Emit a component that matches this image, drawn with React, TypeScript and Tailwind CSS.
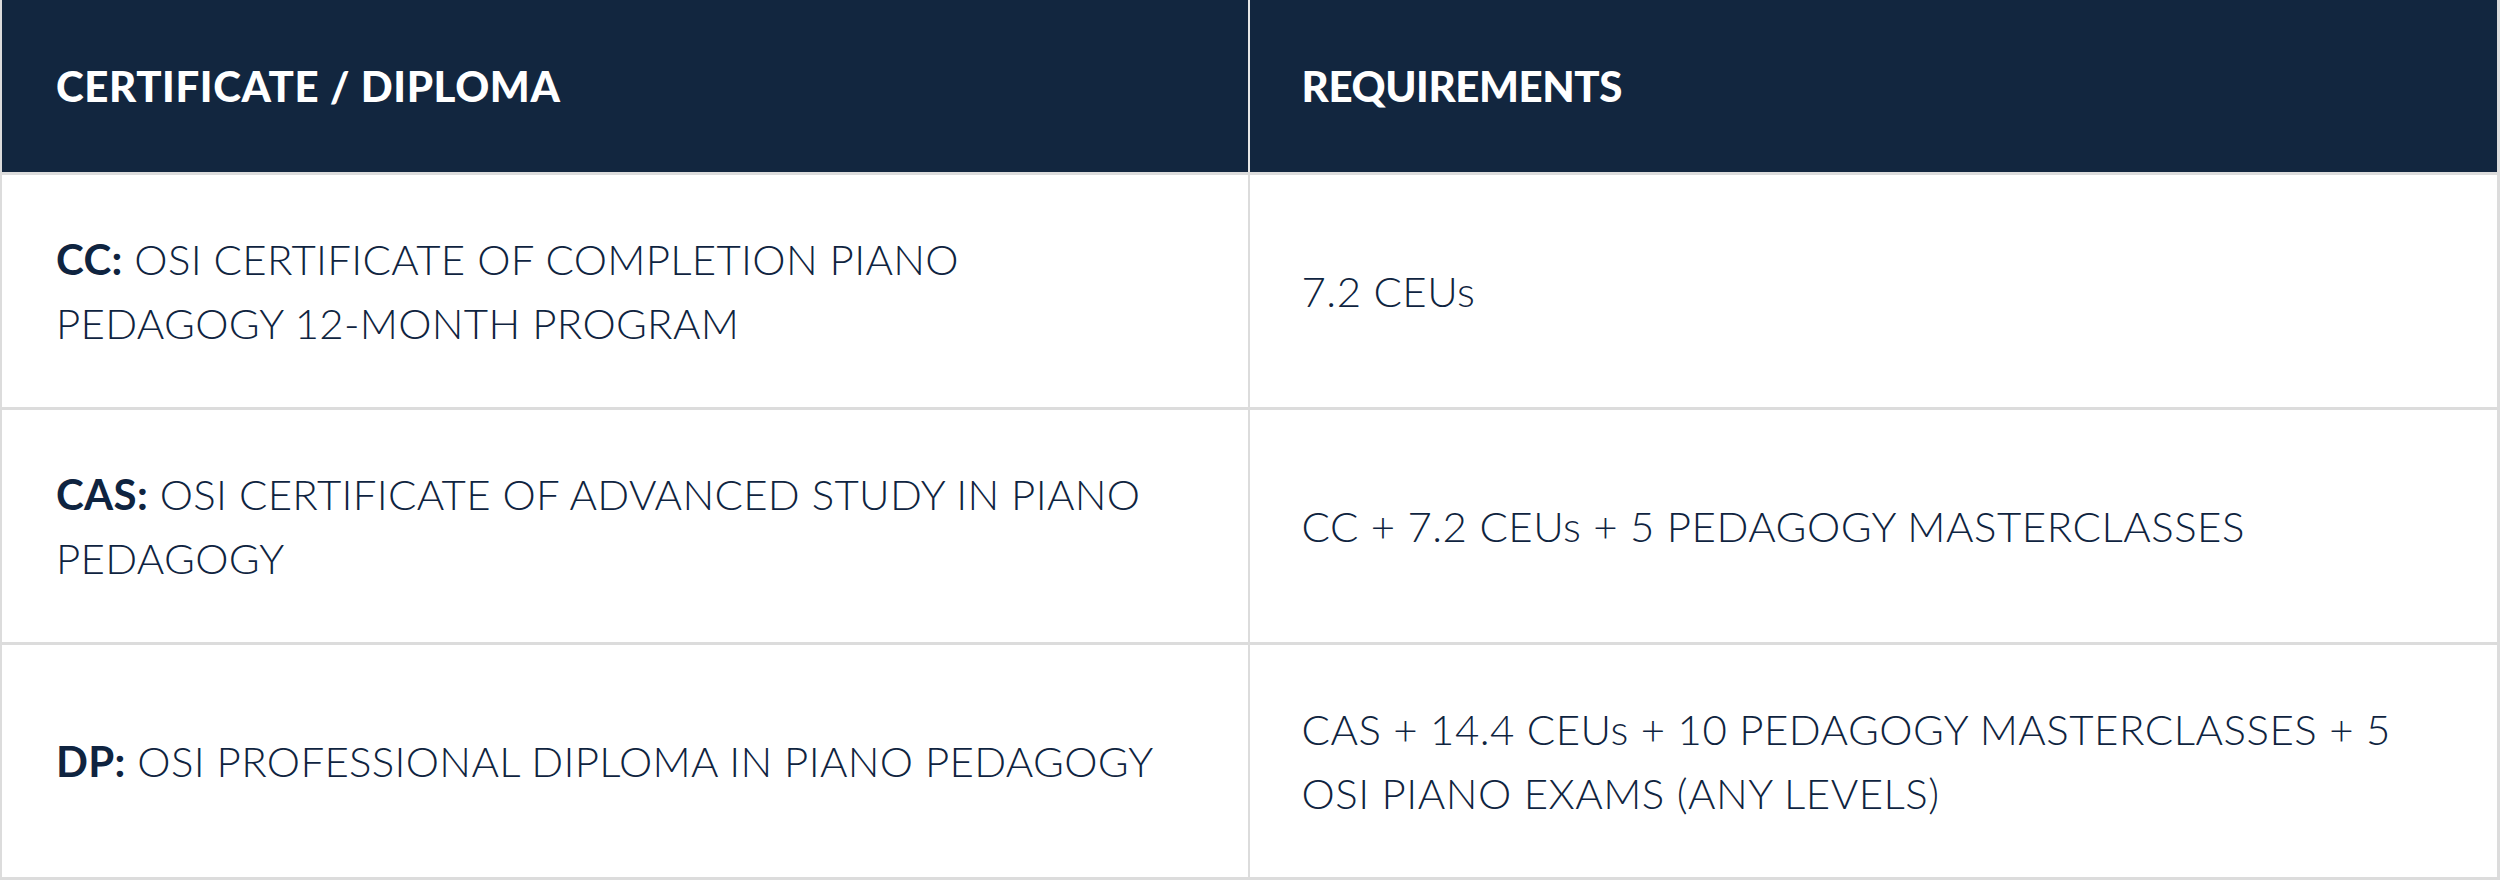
const rows = [
  {
    code: 'CC:',
    name: 'OSI CERTIFICATE OF COMPLETION PIANO PEDAGOGY 12-MONTH PROGRAM',
    req: '7.2 CEUs',
  },
  {
    code: 'CAS:',
    name: 'OSI CERTIFICATE OF ADVANCED STUDY IN PIANO PEDAGOGY',
    req: 'CC + 7.2 CEUs + 5 PEDAGOGY MASTERCLASSES',
  },
  {
    code: 'DP:',
    name: 'OSI PROFESSIONAL DIPLOMA IN PIANO PEDAGOGY',
    req: 'CAS + 14.4 CEUs + 10 PEDAGOGY MASTERCLASSES + 5 OSI PIANO EXAMS (ANY LEVELS)',
  },
]

export default function App() {
  return (
    <div className="w-[2500px] h-[893px] bg-white font-['Lato','Liberation_Sans',sans-serif] text-[#0f2440]">
      <div className="grid grid-cols-2 border-l-2 border-r-[3px] border-b-[3px] border-[#dcdcdc]">
        {/* header */}
        <div className="h-[172px] bg-[#12263f] border-r-2 border-[#e6e6e6] flex items-center px-[54px] text-white font-black text-[42px] tracking-[0.6px]">
          CERTIFICATE / DIPLOMA
        </div>
        <div className="h-[172px] bg-[#12263f] flex items-center px-[52px] text-white font-black text-[42px] tracking-[-0.4px]">
          REQUIREMENTS
        </div>

        {rows.map((r, i) => (
          <div key={i} className="contents">
            <div className="h-[235px] border-t-[3px] border-r-2 border-[#dcdcdc] flex items-center pl-[54px]">
              <p className="max-w-[1120px] text-[42px] leading-[64px] font-light tracking-[0.3px]">
                <span className="font-bold">{r.code}</span> {r.name}
              </p>
            </div>
            <div className="h-[235px] border-t-[3px] border-[#dcdcdc] flex items-center pl-[52px] pr-[50px]">
              <p className="text-[42px] leading-[64px] font-light tracking-[0.5px]">{r.req}</p>
            </div>
          </div>
        ))}
      </div>
    </div>
  )
}
